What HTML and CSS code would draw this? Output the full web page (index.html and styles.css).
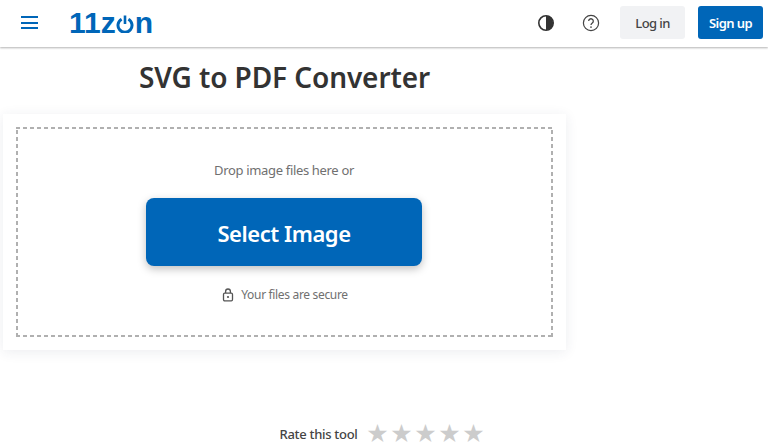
FILE: index.html
```html
<!DOCTYPE html>
<html lang="en">
<head>
    <meta charset="UTF-8">
    <meta name="viewport" content="width=device-width, initial-scale=1.0">
    <title>SVG to PDF Converter</title>
    <link rel="stylesheet" href="styles.css">
</head>
<body>
    <!-- Top bar -->
    <header class="topbar">
        <div class="topbar-left">
            <button class="menu-btn" aria-label="Menu">
                <span></span><span></span><span></span>
            </button>
            <a class="logo" href="#">11z<svg class="logo-power" viewBox="0 0 18 19" aria-hidden="true"><path d="M5.6 5.2a7 7 0 1 0 6.8 0" fill="none" stroke="#0066b8" stroke-width="3"/><path d="M9 1.5v8.5" stroke="#0066b8" stroke-width="2.6"/></svg>n</a>
        </div>
        <div class="topbar-right">
            <svg class="icon-contrast" viewBox="0 0 18 18" aria-label="Theme">
                <circle cx="9" cy="9" r="7.2" fill="none" stroke="#333" stroke-width="1.6"/>
                <path d="M9 1.8a7.2 7.2 0 0 1 0 14.4z" fill="#333"/>
            </svg>
            <svg class="icon-help" viewBox="0 0 18 18" aria-label="Help">
                <circle cx="9" cy="9" r="7.6" fill="none" stroke="#444" stroke-width="1.2"/>
                <path d="M6.7 7.1a2.3 2.3 0 1 1 3.6 1.9c-.9.6-1.3 1-1.3 2" fill="none" stroke="#444" stroke-width="1.3"/>
                <circle cx="9" cy="13.1" r=".85" fill="#444"/>
            </svg>
            <a class="btn btn-login" href="#">Log in</a>
            <a class="btn btn-signup" href="#">Sign up</a>
        </div>
    </header>

    <main class="content">
        <h1 class="page-title">SVG to PDF Converter</h1>

        <section class="upload-card">
            <div class="dropzone">
                <p class="drop-text">Drop image files here or</p>
                <button class="select-btn">Select Image</button>
                <p class="secure-text">
                    <svg class="icon-lock" viewBox="0 0 12 14" aria-hidden="true">
                        <rect x="1.5" y="5.2" width="9" height="7.6" rx="1.2" fill="none" stroke="#555" stroke-width="1.3"/>
                        <path d="M3.6 5V3.4a2.4 2.4 0 0 1 4.8 0V5" fill="none" stroke="#555" stroke-width="1.3"/>
                        <circle cx="6" cy="9" r="1.1" fill="#555"/>
                    </svg>
                    Your files are secure
                </p>
            </div>
        </section>

        <div class="rating">
            <span class="rating-label">Rate this tool</span>
            <div class="stars">
                <span>★</span><span>★</span><span>★</span><span>★</span><span>★</span>
            </div>
        </div>
    </main>
</body>
</html>
```

FILE: styles.css
```css
* {
    margin: 0;
    padding: 0;
    box-sizing: border-box;
}

body {
    font-family: "Noto Sans", "Open Sans", Arial, sans-serif;
    background-color: #fff;
    height: 448px;
    overflow: hidden;
}

.topbar {
    height: 47px;
    display: flex;
    justify-content: space-between;
    align-items: center;
    padding: 0 5px 2px 21px;
    background: #fff;
    box-shadow: 0 1px 2px rgba(0, 0, 0, 0.3);
}

.topbar-left {
    display: flex;
    align-items: center;
    gap: 32px;
}

.menu-btn {
    width: 17px;
    display: flex;
    flex-direction: column;
    gap: 3.5px;
    background: none;
    border: none;
}

.menu-btn span {
    display: block;
    height: 2px;
    background: #0066b8;
}

.logo {
    display: flex;
    align-items: baseline;
    margin-left: -1px;
    font-family: "Liberation Sans", Arial, sans-serif;
    font-size: 30px;
    font-weight: 700;
    line-height: 1;
    color: #0066b8;
    text-decoration: none;
}

.logo-power {
    width: 18px;
    height: 19px;
    margin: 0 1px 0 0;
}

.topbar-right {
    display: flex;
    align-items: center;
}

.icon-contrast {
    width: 18px;
    height: 18px;
    margin-right: 27px;
}

.icon-help {
    width: 18px;
    height: 18px;
    margin-right: 20px;
}

.btn {
    height: 33px;
    display: flex;
    align-items: center;
    justify-content: center;
    border-radius: 3px;
    font-size: 13px;
    font-weight: 500;
    text-decoration: none;
}

.btn-login {
    width: 65px;
    margin-right: 13px;
    background: #f1f2f4;
    color: #444;
    letter-spacing: -0.6px;
}

.btn-signup {
    width: 65px;
    background: #0066b8;
    color: #fff;
    font-weight: 600;
    letter-spacing: -0.6px;
}

.content {
    width: 566px;
    padding-left: 3px;
}

.page-title {
    margin-top: 13px;
    height: 54px;
    font-size: 28px;
    font-weight: 600;
    line-height: 34px;
    color: #333;
    text-align: center;
    letter-spacing: -0.1px;
}

.upload-card {
    width: 563px;
    height: 236px;
    padding: 13px;
    background: #fff;
    box-shadow: 0 2px 12px rgba(40, 50, 90, 0.09);
}

/* dashes drawn by hand, a 2px dashed border comes out too long */
.dropzone {
    height: 100%;
    display: flex;
    flex-direction: column;
    align-items: center;
    padding: 2px 3px 2px 2px;
    background-image:
        repeating-linear-gradient(90deg, #b0b0b0 0 4px, transparent 4px 7px),
        repeating-linear-gradient(90deg, #b0b0b0 0 4px, transparent 4px 7px),
        repeating-linear-gradient(0deg, #b0b0b0 0 4px, transparent 4px 7px),
        repeating-linear-gradient(0deg, #b0b0b0 0 4px, transparent 4px 7px);
    background-size: 100% 2px, 100% 2px, 2px 100%, 2px 100%;
    background-position: top left, bottom left, top left, top right;
    background-repeat: no-repeat;
}

.drop-text {
    margin-top: 32px;
    font-size: 13px;
    line-height: 18px;
    color: #707070;
    letter-spacing: -0.33px;
}

.select-btn {
    width: 276px;
    height: 68px;
    margin-top: 19px;
    padding-top: 2px;
    border: none;
    border-radius: 8px;
    background: #0066b8;
    box-shadow: 0 3px 8px rgba(0, 0, 0, 0.25);
    font-family: inherit;
    font-size: 22px;
    font-weight: 600;
    color: #fff;
    letter-spacing: -0.45px;
}

.secure-text {
    display: flex;
    align-items: center;
    gap: 7px;
    margin-top: 20px;
    padding-left: 2px;
    font-size: 12px;
    line-height: 18px;
    color: #707070;
    letter-spacing: -0.33px;
}

.icon-lock {
    width: 12px;
    height: 14px;
}

.rating {
    display: flex;
    justify-content: center;
    align-items: center;
    gap: 8px;
    margin: 72px 0 0 196px;
}

.rating-label {
    font-size: 13px;
    font-weight: 500;
    color: #444;
    letter-spacing: -0.3px;
}

.stars {
    display: flex;
    font-family: "DejaVu Sans", sans-serif;
    font-size: 25px;
    line-height: 24px;
    color: #ccc;
}

.stars span {
    width: 24px;
    text-align: center;
}
```
